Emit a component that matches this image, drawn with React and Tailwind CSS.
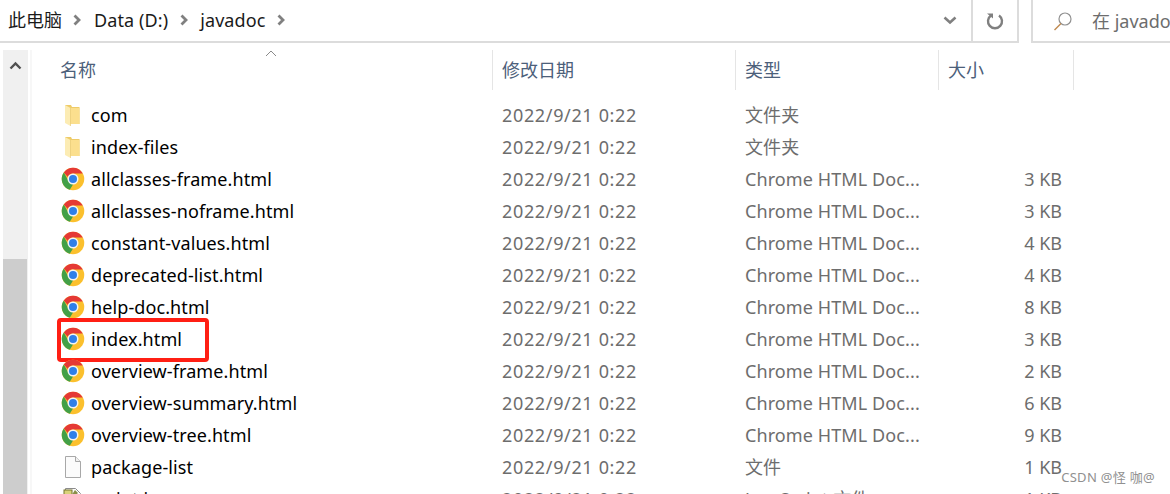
import React from 'react';

const font = { fontFamily: '"Noto Sans", "Noto Sans CJK SC", sans-serif' };

const rows = [
  { name: 'com', icon: 'folder', type: '文件夹', size: '' },
  { name: 'index-files', icon: 'folder', type: '文件夹', size: '' },
  { name: 'allclasses-frame.html', icon: 'chrome', type: 'Chrome HTML Doc...', size: '3 KB' },
  { name: 'allclasses-noframe.html', icon: 'chrome', type: 'Chrome HTML Doc...', size: '3 KB' },
  { name: 'constant-values.html', icon: 'chrome', type: 'Chrome HTML Doc...', size: '4 KB' },
  { name: 'deprecated-list.html', icon: 'chrome', type: 'Chrome HTML Doc...', size: '4 KB' },
  { name: 'help-doc.html', icon: 'chrome', type: 'Chrome HTML Doc...', size: '8 KB' },
  { name: 'index.html', icon: 'chrome', type: 'Chrome HTML Doc...', size: '3 KB', marked: true },
  { name: 'overview-frame.html', icon: 'chrome', type: 'Chrome HTML Doc...', size: '2 KB' },
  { name: 'overview-summary.html', icon: 'chrome', type: 'Chrome HTML Doc...', size: '6 KB' },
  { name: 'overview-tree.html', icon: 'chrome', type: 'Chrome HTML Doc...', size: '9 KB' },
  { name: 'package-list', icon: 'file', type: '文件', size: '1 KB' },
  { name: 'script.js', icon: 'script', type: 'JavaScript 文件', size: '1 KB' },
];

function FolderIcon() {
  return (
    <svg width="24" height="24" viewBox="0 0 24 24">
      <path d="M4 2h6l1 2h7.5v17H8z" fill="#eecb68" />
      <path d="M9 5h9.5v16H9z" fill="#fbdf8e" />
      <path d="M4 2l5.5 3v18L4 20z" fill="#fcecb4" />
      <path d="M9.5 5v18" stroke="#e6c469" strokeWidth="0.6" />
    </svg>
  );
}

function ChromeIcon() {
  return (
    <svg width="24" height="24" viewBox="0 0 48 48" className="-mt-[1px]">
      <circle cx="24" cy="24" r="22.5" fill="#fbc02d" />
      <path d="M24 1.5a22.5 22.5 0 0 1 19.5 11.25H24a11 11 0 0 0-10.4 7.4L5.6 11A22.5 22.5 0 0 1 24 1.5z" fill="#e53935" />
      <path d="M5.6 11l9.9 17.6a11 11 0 0 0 8.5 6.4L17.6 45.6A22.5 22.5 0 0 1 5.6 11z" fill="#43a047" />
      <circle cx="24" cy="24" r="11" fill="#f4f4f4" />
      <circle cx="24" cy="24" r="8" fill="#2f7fe8" />
    </svg>
  );
}

function FileIcon() {
  return (
    <svg width="24" height="24" viewBox="0 0 24 24">
      <path d="M4.5 1.5h10l5 5v16h-15z" fill="#fbfbfb" stroke="#a8a8a8" />
      <path d="M14.5 1.5v5h5" fill="#f0f0f0" stroke="#a8a8a8" />
    </svg>
  );
}

function ScriptIcon() {
  return (
    <svg width="24" height="24" viewBox="0 0 24 24">
      <path d="M4.5 1.5h10l5 5v16h-15z" fill="#fbfbfb" stroke="#8c8c8c" />
      <rect x="3" y="3" width="8" height="7" fill="#d9d27a" stroke="#77752f" />
      <path d="M14 3l3 3-5 5-3 1 1-3z" fill="#8a8f4a" />
    </svg>
  );
}

function RowIcon({ type }) {
  if (type === 'folder') return <FolderIcon />;
  if (type === 'chrome') return <ChromeIcon />;
  if (type === 'script') return <ScriptIcon />;
  return <FileIcon />;
}

function Chevron() {
  return (
    <svg width="9" height="12" viewBox="0 0 9 12" className="shrink-0">
      <path d="M1.5 1.5l4.5 4.5-4.5 4.5" fill="none" stroke="#808080" strokeWidth="2.8" />
    </svg>
  );
}

function Column({ label, className }) {
  return (
    <div className={`h-10 flex items-center border-r border-[#e5e5e5] ${className}`}>
      <span className="text-[#4c607a] text-[18px]">{label}</span>
    </div>
  );
}

export default function App() {
  return (
    <div className="w-[1170px] h-[494px] overflow-hidden bg-white relative text-[18px] leading-none" style={font}>
      <div className="h-[43px] flex">
        <div className="w-[1019px] flex items-center border-b-2 border-r-2 border-[#dcdcdc]">
          <div className="flex-1 flex items-center pl-2 pb-[2px] text-[#1a1a1a]">
            <span>此电脑</span>
            <span className="ml-[11px]"><Chevron /></span>
            <span className="ml-[12px] tracking-[0.1px]">Data (D:)</span>
            <span className="ml-[12px]"><Chevron /></span>
            <span className="ml-[11px] tracking-[0.1px]">javadoc</span>
            <span className="ml-[12px]"><Chevron /></span>
          </div>
          <div className="w-[30px] pl-[2px] flex items-center">
            <svg width="14" height="9" viewBox="0 0 14 9">
              <path d="M1.5 1.5l5.5 5 5.5-5" fill="none" stroke="#808080" strokeWidth="2.6" />
            </svg>
          </div>
          <div className="w-[46px] h-full flex items-center justify-center border-l-2 border-[#dcdcdc]">
            <svg width="18" height="18" viewBox="0 0 18 18">
              <path d="M5 3.5A7 7 0 1 0 13 3.5" fill="none" stroke="#808080" strokeWidth="2.4" />
              <path d="M1 2.5h6v5z" fill="#808080" transform="translate(0 -1)" />
            </svg>
          </div>
        </div>
        <div className="w-[12px]" />
        <div className="flex-1 flex items-center border-l-2 border-b-2 border-[#dcdcdc] pl-[20px] text-[#6d6d6d] overflow-hidden whitespace-nowrap">
          <svg width="20" height="20" viewBox="0 0 20 20" className="shrink-0">
            <circle cx="12" cy="8" r="6" fill="none" stroke="#909090" strokeWidth="1.2" />
            <path d="M8 12.5L1.5 19" stroke="#c08a50" strokeWidth="1.4" />
          </svg>
          <span className="ml-[19px]">在 javadoc</span>
        </div>
      </div>

      <div className="flex h-[451px]">
        <div className="w-[30px] pt-[7px] pl-[3px] shrink-0">
          <div className="w-[25px] h-full bg-[#f0f0f0] flex flex-col">
            <div className="h-[30px] flex items-center justify-center">
              <svg width="13" height="9" viewBox="0 0 13 9">
                <path d="M1.5 7.5l5-5 5 5" fill="none" stroke="#505050" strokeWidth="2.4" />
              </svg>
            </div>
            <div className="mt-[179px] flex-1 w-[24px] bg-[#cdcdcd]" />
          </div>
        </div>
        <div className="w-[2px] mt-[7px] bg-[#f7f7f7] shrink-0" />

        <div className="flex-1 pt-[7px] min-w-0">
          <div className="flex relative">
            <Column label="名称" className="w-[461px] pl-[28px]" />
            <Column label="修改日期" className="w-[243px] pl-[9px]" />
            <Column label="类型" className="w-[203px] pl-[9px]" />
            <Column label="大小" className="w-[135px] pl-[9px]" />
            <svg width="12" height="7" viewBox="0 0 12 7" className="absolute left-[233px] top-0">
              <path d="M1 6l5-5 5 5" fill="none" stroke="#8a8a8a" />
            </svg>
          </div>
          <div className="mt-[9px]">
            {rows.map((row) => (
              <div key={row.name} className="h-8 flex items-center relative whitespace-nowrap">
                <div className="w-[461px] flex items-center pl-[29px] gap-[6px] text-black tracking-[0.1px]">
                  <RowIcon type={row.icon} />
                  <span>{row.name}</span>
                </div>
                <div className="w-[243px] pl-[9px] text-[#6d6d6d] tracking-[0.65px]">2022/9/21 0:22</div>
                <div className="w-[203px] pl-[9px] text-[#6d6d6d] tracking-[0.1px]">{row.type}</div>
                <div className="w-[123px] text-right text-[#6d6d6d]">{row.size}</div>
                {row.marked && (
                  <div className="absolute left-[25px] top-[-5px] w-[152px] h-[44px] border-[4px] border-[#ff1f14] rounded-[4px]" />
                )}
              </div>
            ))}
          </div>
        </div>
      </div>

      <div className="absolute right-[15px] bottom-[10px] text-[13px] tracking-[0.3px] text-[#909090] leading-none">CSDN @怪 咖@</div>
    </div>
  );
}
